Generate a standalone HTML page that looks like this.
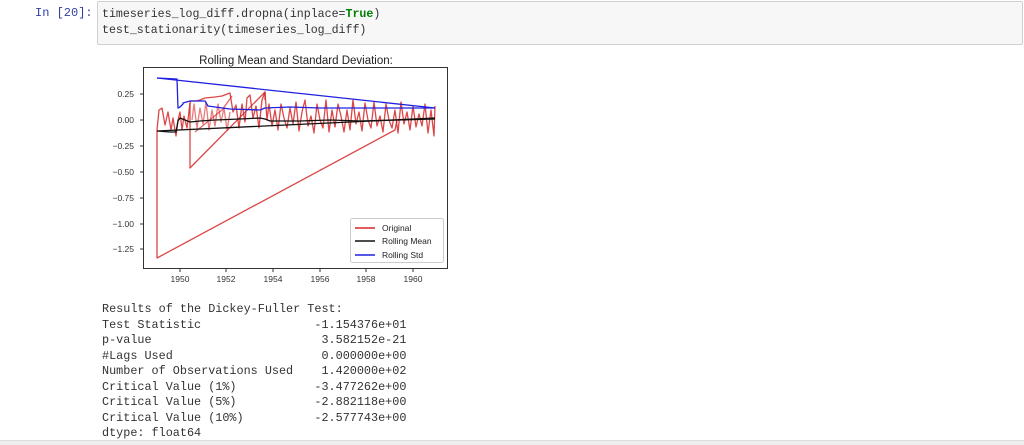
<!DOCTYPE html>
<html><head><style>
body{margin:0;background:#fff;width:1024px;height:444px;overflow:hidden;position:relative;font-family:"Liberation Sans",sans-serif}
.prompt{position:absolute;left:35px;top:6px;font:12px "Liberation Mono",monospace;color:#303f9f}
.inbox{position:absolute;left:97px;top:1px;width:924px;height:42px;background:#f7f7f7;border:1px solid #cfcfcf;border-radius:2px}
.code{position:absolute;left:102px;top:7px;font:11.6px/15.5px "Liberation Mono",monospace;color:#333;white-space:pre}
.out{position:absolute;left:102px;top:302px;font:11.8px/15.5px "Liberation Mono",monospace;color:#333;white-space:pre}
.bottom{position:absolute;left:0;top:440px;width:1024px;height:4px;background:#eee;border-top:1px solid #ddd}
</style></head><body>
<div class="prompt">In [20]:</div>
<div class="inbox"></div>
<div class="code">timeseries_log_diff.dropna(inplace=<b style="color:#008000">True</b>)
test_stationarity(timeseries_log_diff)</div>
<svg style="position:absolute;left:0;top:0" width="1024" height="300" font-family="Liberation Sans,DejaVu Sans,sans-serif">
<text x="296" y="64" font-size="11.5" text-anchor="middle" fill="#222">Rolling Mean and Standard Deviation:</text>
<rect x="143.5" y="67.5" width="304" height="201" fill="#fff" stroke="#333" stroke-width="1"/>
<g font-size="8.5" fill="#333" text-anchor="end">
<text x="134" y="97">0.25</text><text x="134" y="123">0.00</text><text x="134" y="149">−0.25</text><text x="134" y="175">−0.50</text><text x="134" y="201">−0.75</text><text x="134" y="227">−1.00</text><text x="134" y="252">−1.25</text>
</g>
<g stroke="#333"><line x1="140" y1="94" x2="143" y2="94"/><line x1="140" y1="120" x2="143" y2="120"/><line x1="140" y1="146" x2="143" y2="146"/><line x1="140" y1="172" x2="143" y2="172"/><line x1="140" y1="198" x2="143" y2="198"/><line x1="140" y1="224" x2="143" y2="224"/><line x1="140" y1="249" x2="143" y2="249"/>
<line x1="180" y1="269" x2="180" y2="272"/><line x1="226" y1="269" x2="226" y2="272"/><line x1="273" y1="269" x2="273" y2="272"/><line x1="320" y1="269" x2="320" y2="272"/><line x1="366" y1="269" x2="366" y2="272"/><line x1="413" y1="269" x2="413" y2="272"/></g>
<g font-size="8.5" fill="#333" text-anchor="middle"><text x="180" y="282">1950</text><text x="226" y="282">1952</text><text x="273" y="282">1954</text><text x="320" y="282">1956</text><text x="366" y="282">1958</text><text x="413" y="282">1960</text></g>
<g fill="none" stroke-width="1.3" stroke-linejoin="round">
<polyline stroke="#d62728" stroke-opacity=".85" points="157,130 159,110 162,108 165,125 168,112 171,130 173,118 176,136 178,120 180,112 182,130 184,116 187,128 190,103 191,101 196,101 200,100 205,98 215,97 222,96 230,93 233,112 236,105 239,128 242,104 245,122 247,98 250,95 253,118 256,106 259,128 262,100 265,92 267,120 269,104 272,126 275,110 278,130 281,104 284,118 287,128 290,108 293,124 296,102 299,131 302,112 305,100 308,126 311,116 314,133 317,104 320,120 323,128 326,100 329,132 332,110 335,127 338,104 341,116 344,132 347,110 350,130 353,100 356,124 359,112 362,131 365,103 368,120 371,128 374,102 377,126 380,116 383,132 386,104 389,120 392,128 395,110 398,133 401,102 404,124 407,112 410,130 413,106 416,127 419,114 422,126 425,104 428,133 431,110 434,136 435,106"/>
<polyline stroke="#d62728" stroke-opacity=".6" points="192,120 194,104 197,128 200,108 203,124 206,102 209,130 212,110 215,126 218,104 221,122 224,108 227,130 230,112"/>
<polyline stroke="#d62728" stroke-opacity=".85" points="157,130 157,258 395,130 397,120"/>
<polyline stroke="#d62728" stroke-opacity=".85" points="190,103 190,168 265,92 265,100"/>
<polyline stroke="#d62728" stroke-opacity=".7" points="195,132 222,110 232,96"/>
<polyline stroke="#2020e0" points="157,78 177,79 178,108 180,107 183,104 183,103 190,101 192,101 205,101 208,106 215,107 230,109 260,110 265,108 290,107 320,108 350,108 380,108 410,108 435,108"/>
<polyline stroke="#2020e0" points="157,78 435,108"/>
<polyline stroke="#111" points="157,131 170,132 176,132 178,121 180,118 190,122 200,121 215,120 240,119 260,118 265,119 270,121 300,121 330,120 360,121 400,120 435,119"/>
<polyline stroke="#111" points="157,131 435,118"/>
</g>
<rect x="350.5" y="218.5" width="93" height="44" fill="#fff" stroke="#ccc" rx="2"/>
<g stroke-width="1.5"><line x1="355" y1="228" x2="375" y2="228" stroke="#d62728"/><line x1="355" y1="241" x2="375" y2="241" stroke="#111"/><line x1="355" y1="255" x2="375" y2="255" stroke="#2020e0"/></g>
<g font-size="8.5" fill="#222"><text x="382" y="231">Original</text><text x="382" y="244">Rolling Mean</text><text x="382" y="258">Rolling Std</text></g>
</svg>
<div class="out">Results of the Dickey-Fuller Test:
Test Statistic                -1.154376e+01
p-value                        3.582152e-21
#Lags Used                     0.000000e+00
Number of Observations Used    1.420000e+02
Critical Value (1%)           -3.477262e+00
Critical Value (5%)           -2.882118e+00
Critical Value (10%)          -2.577743e+00
dtype: float64</div>
<div class="bottom"></div>
</body></html>
